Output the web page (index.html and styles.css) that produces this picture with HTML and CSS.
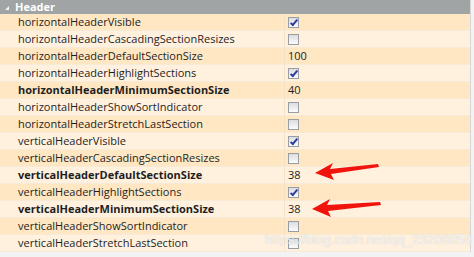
FILE: index.html
```html
<html>

<head>
  <link rel="stylesheet" href="styles.css">
</head>

<body>
  <div class="grid">
    <div class="head">
      <span class="tri"></span>
      <span class="title">Header</span>
    </div>

    <div class="row">
      <div class="name">horizontalHeaderVisible</div>
      <div class="val"><span class="cb on"></span></div>
    </div>
    <div class="row">
      <div class="name">horizontalHeaderCascadingSectionResizes</div>
      <div class="val"><span class="cb"></span></div>
    </div>
    <div class="row">
      <div class="name">horizontalHeaderDefaultSectionSize</div>
      <div class="val">100</div>
    </div>
    <div class="row">
      <div class="name">horizontalHeaderHighlightSections</div>
      <div class="val"><span class="cb on"></span></div>
    </div>
    <div class="row bold">
      <div class="name">horizontalHeaderMinimumSectionSize</div>
      <div class="val">40</div>
    </div>
    <div class="row">
      <div class="name">horizontalHeaderShowSortIndicator</div>
      <div class="val"><span class="cb"></span></div>
    </div>
    <div class="row">
      <div class="name">horizontalHeaderStretchLastSection</div>
      <div class="val"><span class="cb"></span></div>
    </div>
    <div class="row">
      <div class="name">verticalHeaderVisible</div>
      <div class="val"><span class="cb on"></span></div>
    </div>
    <div class="row">
      <div class="name">verticalHeaderCascadingSectionResizes</div>
      <div class="val"><span class="cb"></span></div>
    </div>
    <div class="row bold">
      <div class="name">verticalHeaderDefaultSectionSize</div>
      <div class="val">38</div>
    </div>
    <div class="row">
      <div class="name">verticalHeaderHighlightSections</div>
      <div class="val"><span class="cb on"></span></div>
    </div>
    <div class="row bold">
      <div class="name">verticalHeaderMinimumSectionSize</div>
      <div class="val">38</div>
    </div>
    <div class="row">
      <div class="name">verticalHeaderShowSortIndicator</div>
      <div class="val"><span class="cb"></span></div>
    </div>
    <div class="row">
      <div class="name">verticalHeaderStretchLastSection</div>
      <div class="val"><span class="cb"></span></div>
    </div>
  </div>

  <!-- red arrows drawn over the screenshot -->
  <svg class="arrows" width="474" height="257" viewBox="0 0 474 257">
    <g fill="#f0140c">
      <polygon points="315,173 333,163 330,169 378,164 379,167 331,174 334,180" />
      <polygon points="312,209 330,199 327,205 380,202 381,205 328,211 331,217" />
    </g>
  </svg>

  <div class="mark">https://blog.csdn.net/qq_23208859</div>
</body>

</html>
```

FILE: styles.css
```css
body {
  margin: 0;
  background: #f3f3f3;
  font-family: "Open Sans", "Noto Sans", sans-serif;
  font-size: 11px;
  color: #1e1e1e;
  position: relative;
  height: 257px;
  overflow: hidden;
}

.grid {
  width: 470px;
  border-right: 1px solid #d6d6d6;
  background: #fdf3e4;
}

.head {
  height: 14px;
  background: #a0a4a4;
  display: flex;
  align-items: center;
  color: #ffffff;
  font-weight: bold;
}

.tri {
  width: 0;
  height: 0;
  margin: 1px 6px 0 5px;
  border-left: 4px solid transparent;
  border-bottom: 4px solid #f4f4f4;
}

.title {
  line-height: 14px;
}

.row {
  display: grid;
  grid-template-columns: 285px 1fr;
  height: 17px;
  box-sizing: border-box;
  border-bottom: 1px solid #f6ead8;
  background: #ffe7c4;
}

.row:nth-child(odd) {
  background: #fff1de;
}

.bold {
  font-weight: bold;
}

.name {
  padding-left: 18px;
  line-height: 16px;
  border-right: 1px solid #f3e2c8;
  white-space: nowrap;
}

.val {
  padding-left: 3px;
  line-height: 16px;
  display: flex;
  align-items: center;
}

.bold .val {
  font-weight: normal;
}

.cb {
  width: 9px;
  height: 9px;
  border: 1px solid #9a9da2;
  background: linear-gradient(#dcdde0, #fbfbfb);
  position: relative;
}

.cb.on::after {
  content: "";
  position: absolute;
  left: 3px;
  top: 0px;
  width: 2px;
  height: 6px;
  border: solid #2b3fa0;
  border-width: 0 2px 2px 0;
  transform: rotate(40deg);
}

.arrows {
  position: absolute;
  left: 0;
  top: 0;
}

.mark {
  position: absolute;
  left: 265px;
  top: 232px;
  font-family: "Liberation Sans", sans-serif;
  font-size: 13.5px;
  white-space: nowrap;
  color: rgba(255, 255, 255, 0.8);
  text-shadow: 0 0 1px rgba(170, 170, 170, 0.7);
}
```
